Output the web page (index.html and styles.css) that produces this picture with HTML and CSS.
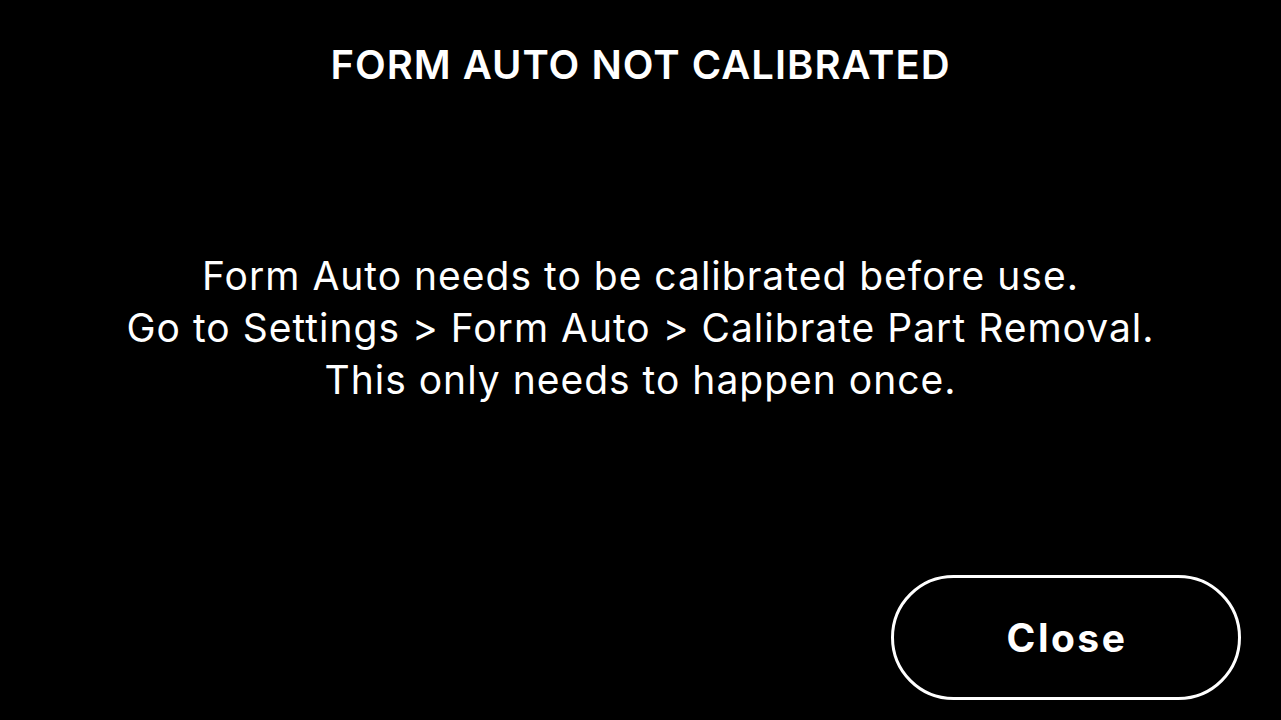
FILE: index.html
```html
<!DOCTYPE html>
<html lang="en">
<head>
<meta charset="utf-8">
<title>Form Auto Not Calibrated</title>
<link rel="stylesheet" href="styles.css">
</head>
<body>
<div class="screen">
  <h1 class="title">FORM AUTO NOT CALIBRATED</h1>
  <div class="message">
    <p>Form Auto needs to be calibrated before use.</p>
    <p>Go to Settings &gt; Form Auto &gt; Calibrate Part Removal.</p>
    <p>This only needs to happen once.</p>
  </div>
  <div class="actions">
    <button class="btn-close">Close</button>
  </div>
</div>
</body>
</html>
```

FILE: styles.css
```css
html, body {
  margin: 0;
  padding: 0;
  background: #000;
}
body {
  font-family: "Inter", "Roboto", "Liberation Sans", sans-serif;
  color: #fff;
}
.screen {
  width: 1281px;
  height: 720px;
  display: flex;
  flex-direction: column;
  box-sizing: border-box;
}
.title {
  margin: 43px 0 0;
  text-align: center;
  font-size: 40px;
  font-weight: 600;
  letter-spacing: 1px;
  line-height: 44px;
}
.message {
  margin-top: 163px;
  text-align: center;
  font-size: 39px;
  line-height: 52px;
  font-weight: 400;
  letter-spacing: 1px;
}
.message p {
  margin: 0;
}
.actions {
  margin-top: auto;
  display: flex;
  justify-content: flex-end;
  padding: 0 40px 20px 0;
}
.btn-close {
  width: 350px;
  height: 125px;
  border: 3px solid #fff;
  border-radius: 63px;
  background: #000;
  color: #fff;
  font-family: inherit;
  font-size: 39px;
  font-weight: 700;
  letter-spacing: 2.5px;
  padding: 0 0 0 2px;
  cursor: pointer;
}
```
